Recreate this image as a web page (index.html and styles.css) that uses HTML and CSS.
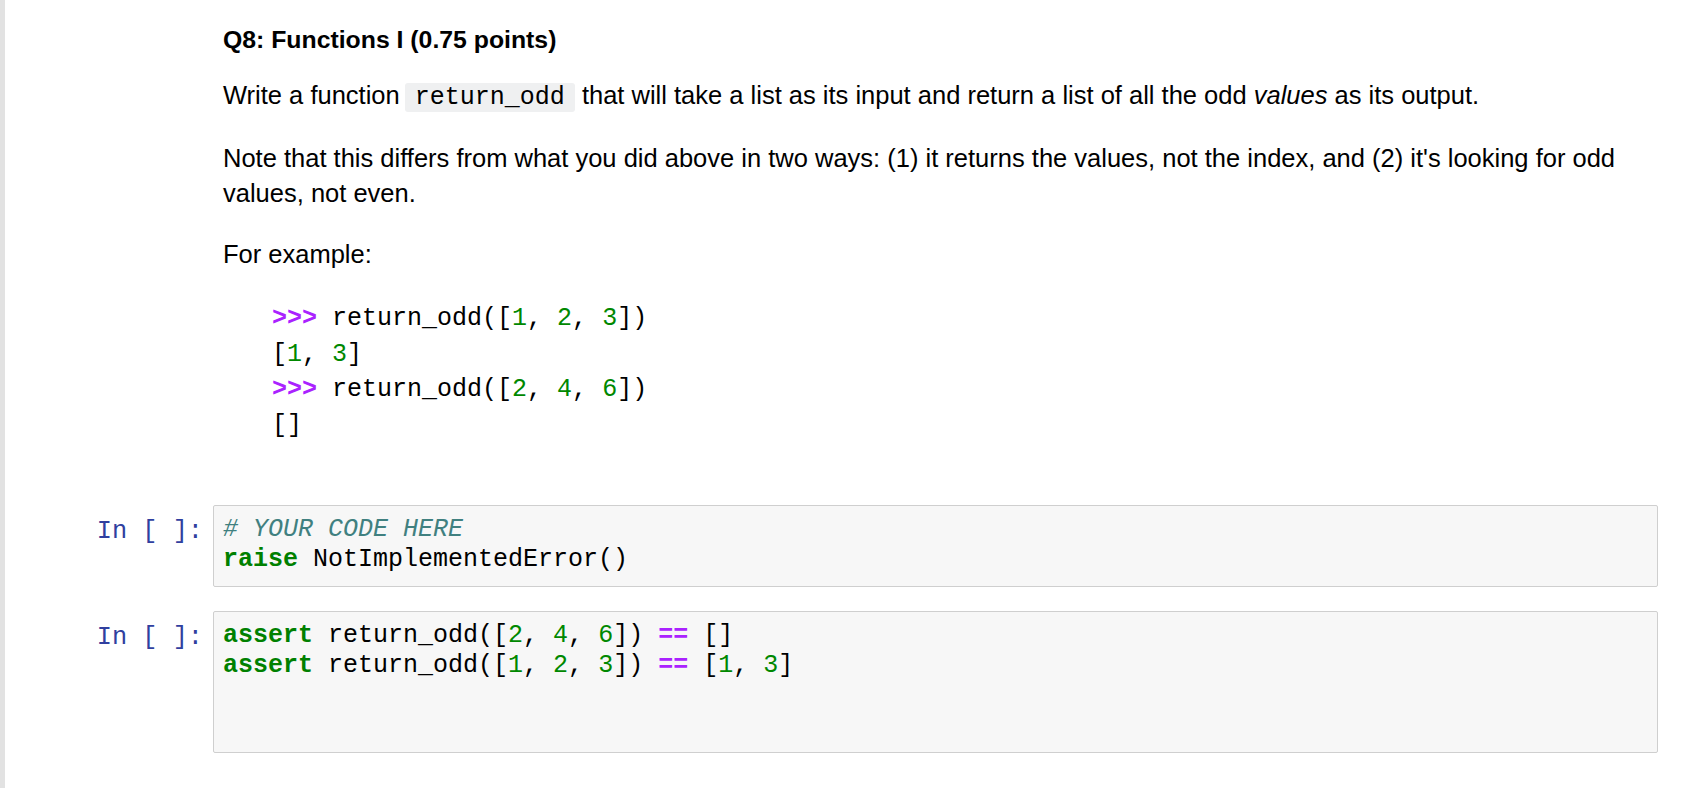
FILE: index.html
```html
<!DOCTYPE html>
<html lang="en">
<head>
<meta charset="utf-8">
<title>Q8: Functions I</title>
<link rel="stylesheet" href="styles.css">
</head>
<body>
<div class="page">
  <div class="notebook">
    <div class="cell text-cell">
      <div class="prompt"></div>
      <div class="md">
        <h3>Q8: Functions I (0.75 points)</h3>
        <p>Write a function <code>return_odd</code> that will take a list as its input and return a list of all the odd <em>values</em> as its output.</p>
        <p>Note that this differs from what you did above in two ways: (1) it returns the values, not the index, and (2) it's looking for odd values, not even.</p>
        <p>For example:</p>
        <div class="example">
          <div class="ex-line"><span class="op">&gt;&gt;&gt;</span> return_odd([<span class="num">1</span>, <span class="num">2</span>, <span class="num">3</span>])</div>
          <div class="ex-line">[<span class="num">1</span>, <span class="num">3</span>]</div>
          <div class="ex-line"><span class="op">&gt;&gt;&gt;</span> return_odd([<span class="num">2</span>, <span class="num">4</span>, <span class="num">6</span>])</div>
          <div class="ex-line">[]</div>
        </div>
      </div>
    </div>

    <div class="cell code-cell first">
      <div class="prompt">In [ ]:</div>
      <div class="input-area">
        <div class="line"><span class="comment"># YOUR CODE HERE</span></div>
        <div class="line"><span class="kw">raise</span> NotImplementedError()</div>
      </div>
    </div>

    <div class="cell code-cell">
      <div class="prompt">In [ ]:</div>
      <div class="input-area">
        <div class="line"><span class="kw">assert</span> return_odd([<span class="num">2</span>, <span class="num">4</span>, <span class="num">6</span>]) <span class="op">==</span> []</div>
        <div class="line"><span class="kw">assert</span> return_odd([<span class="num">1</span>, <span class="num">2</span>, <span class="num">3</span>]) <span class="op">==</span> [<span class="num">1</span>, <span class="num">3</span>]</div>
        <div class="line">&nbsp;</div>
        <div class="line">&nbsp;</div>
      </div>
    </div>
  </div>
</div>
</body>
</html>
```

FILE: styles.css
```css
html, body {
  margin: 0;
  padding: 0;
  background: #ffffff;
}

body {
  font-family: "Liberation Sans", Arial, Helvetica, sans-serif;
  color: #000000;
}

.page {
  display: flex;
  min-height: 100vh;
  border-left: 5px solid #e2e2e2;
  box-sizing: border-box;
}

.notebook {
  display: flex;
  flex-direction: column;
  padding: 25px 0 0 88px;
  width: 1565px;
}

.cell {
  display: flex;
  align-items: flex-start;
}

.prompt {
  width: 120px;
  flex: 0 0 120px;
  box-sizing: border-box;
  padding: 12px 10px 0 0;
  text-align: right;
  font-family: "Liberation Mono", "Courier New", monospace;
  font-size: 25.3px;
  line-height: 29.7px;
  color: #303f9f;
  white-space: pre;
}

.text-cell .prompt {
  padding: 0;
}

.md {
  flex: 1;
  padding-left: 10px;
  font-size: 25.5px;
  line-height: 35.7px;
}

.md h3 {
  margin: 0 0 23px;
  font-size: 24.8px;
  line-height: 30px;
  font-weight: bold;
}

.md p {
  margin: 25px 0 0;
}

.md h3 + p {
  margin-top: 0;
}

.md code {
  font-family: "Liberation Mono", "Courier New", monospace;
  font-size: 25px;
  background: #eff0f1;
  border-radius: 3px;
  padding: 0 10px;
  margin-left: -2px;
}

.md em {
  font-style: italic;
}

.example {
  margin: 28px 0 0 49px;
  font-family: "Liberation Mono", "Courier New", monospace;
  font-size: 25px;
  line-height: 35.7px;
  color: #000000;
}

.ex-line {
  white-space: pre;
  height: 35.7px;
}

.code-cell {
  margin-top: 24px;
}

.code-cell.first {
  margin-top: 61px;
}

.input-area {
  flex: 1;
  background: #f7f7f7;
  border: 1px solid #cfcfcf;
  border-radius: 2px;
  padding: 9.5px 9px 11.5px;
  font-family: "Liberation Mono", "Courier New", monospace;
  font-size: 25px;
  line-height: 29.7px;
  color: #000000;
}

.line {
  white-space: pre;
  min-height: 29.7px;
}

.kw {
  color: #008000;
  font-weight: bold;
}

.num {
  color: #008800;
}

.op {
  color: #aa22ff;
  font-weight: bold;
}

.comment {
  color: #408080;
  font-style: italic;
}
```
